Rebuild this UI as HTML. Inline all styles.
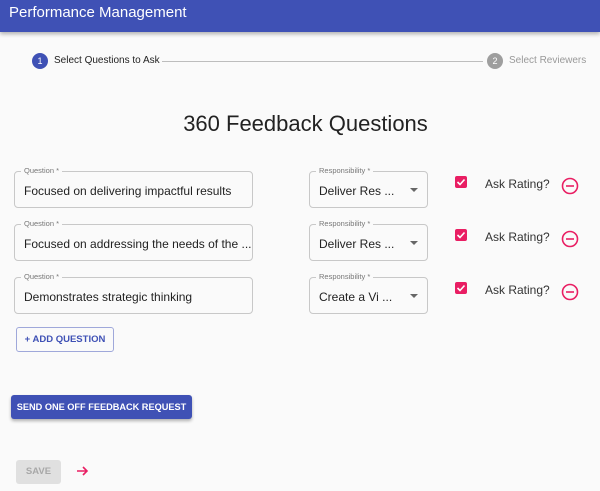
<!DOCTYPE html><html><head><style>
*{box-sizing:border-box;margin:0;padding:0}
body{width:600px;height:491px;background:#fafafa;font-family:"Liberation Sans",sans-serif;position:relative;overflow:hidden;color:#222}
.hdr{position:absolute;left:0;top:0;width:600px;height:32px;background:#3f51b5;box-shadow:0 2px 4px rgba(0,0,0,.3);color:#fff;font-size:15px;padding:4px 0 0 9px}
.a{position:absolute;white-space:nowrap}
.circ{position:absolute;width:16px;height:16px;border-radius:50%;color:#fff;font-size:9px;text-align:center;line-height:16px}
.fld{position:absolute;border:1px solid #c8c8c8;border-radius:4px;height:37px;font-size:12px;padding:12px 0 0 9px;white-space:nowrap}
.lbl{position:absolute;top:-6px;left:6px;background:#fafafa;padding:0 3px;font-size:7.5px;color:#777}
.ask{position:absolute;font-size:12px;color:#333}
.dd{position:absolute;left:100px;top:16px;width:0;height:0;border-left:4px solid transparent;border-right:4px solid transparent;border-top:4px solid #666}
</style></head><body>
<div class="hdr">Performance Management</div>
<div class="circ" style="left:32px;top:53px;background:#3f51b5">1</div>
<div class="a" style="left:54px;top:55px;font-size:10px;color:#222">Select Questions to Ask</div>
<div class="a" style="left:162px;top:61px;width:321px;height:1px;background:#bdbdbd"></div>
<div class="circ" style="left:487px;top:53px;background:#9e9e9e">2</div>
<div class="a" style="left:509px;top:55px;font-size:10px;color:#999">Select Reviewers</div>
<div class="a" style="left:0;width:611px;text-align:center;top:111px;font-size:22px;color:#222">360 Feedback Questions</div>

<div class="fld" style="left:14px;top:171px;width:239px"><span class="lbl">Question *</span>Focused on delivering impactful results</div>
<div class="fld" style="left:309px;top:171px;width:119px"><span class="lbl">Responsibility *</span>Deliver Res ...<span class="dd"></span></div>
<div class="fld" style="left:14px;top:224px;width:239px"><span class="lbl">Question *</span>Focused on addressing the needs of the ...</div>
<div class="fld" style="left:309px;top:224px;width:119px"><span class="lbl">Responsibility *</span>Deliver Res ...<span class="dd"></span></div>
<div class="fld" style="left:14px;top:277px;width:239px"><span class="lbl">Question *</span>Demonstrates strategic thinking</div>
<div class="fld" style="left:309px;top:277px;width:119px"><span class="lbl">Responsibility *</span>Create a Vi ...<span class="dd"></span></div>

<svg class="a" style="left:0;top:0" width="600" height="491">
<g fill="#e91e63"><rect x="455" y="176" width="12" height="12" rx="2"/><rect x="455" y="229" width="12" height="12" rx="2"/><rect x="455" y="282" width="12" height="12" rx="2"/></g>
<g fill="none" stroke="#fff" stroke-width="1.6"><path d="M457.5 182l2.5 2.5 4.5-5"/><path d="M457.5 235l2.5 2.5 4.5-5"/><path d="M457.5 288l2.5 2.5 4.5-5"/></g>
<g fill="none" stroke="#e91e63" stroke-width="1.6"><circle cx="570" cy="186" r="7.5"/><path d="M566 186h8"/><circle cx="570" cy="239" r="7.5"/><path d="M566 239h8"/><circle cx="570" cy="292" r="7.5"/><path d="M566 292h8"/>
<path d="M77 471h10M83 467l4 4-4 4"/></g>
</svg>
<div class="ask" style="left:485px;top:177px">Ask Rating?</div>
<div class="ask" style="left:485px;top:230px">Ask Rating?</div>
<div class="ask" style="left:485px;top:283px">Ask Rating?</div>

<div class="a" style="left:16px;top:327px;width:98px;height:25px;border:1px solid #9fa8da;border-radius:3px;color:#3f51b5;font-size:9.5px;font-weight:bold;text-align:center;line-height:23px">+ ADD QUESTION</div>
<div class="a" style="left:11px;top:395px;width:181px;height:24px;background:#3f51b5;border-radius:3px;box-shadow:0 2px 3px rgba(0,0,0,.3);color:#fff;font-size:9.2px;font-weight:bold;text-align:center;line-height:24px">SEND ONE OFF FEEDBACK REQUEST</div>
<div class="a" style="left:16px;top:460px;width:45px;height:24px;background:#e0e0e0;border-radius:3px;color:#a8a8a8;font-size:9.5px;font-weight:bold;text-align:center;line-height:24px">SAVE</div>
</body></html>
